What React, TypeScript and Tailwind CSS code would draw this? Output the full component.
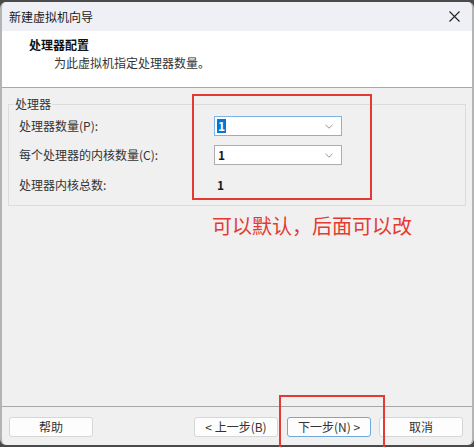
const cjk = "font-['Noto_Sans_CJK_SC','Noto_Sans',sans-serif]";

function Chevron() {
  return (
    <svg width="8" height="5" viewBox="0 0 8 5" className="text-[#8a8a8a]" aria-hidden="true">
      <path d="M0.5 0.8 L4 4.2 L7.5 0.8" fill="none" stroke="currentColor" strokeWidth="0.9" />
    </svg>
  );
}

function Combo({ focused }: { focused?: boolean }) {
  return (
    <div
      className={`flex h-[20px] w-[128px] items-center justify-between border bg-white pl-[2px] pr-[8px] ${
        focused ? 'border-[#7eb4ea]' : 'border-[#adadad]'
      }`}
    >
      {focused ? (
        <span className="flex h-[14px] items-center bg-[#0078d7] px-[1px] text-[12px] font-semibold leading-none text-white">1</span>
      ) : (
        <span className="px-[1px] text-[12px] font-semibold leading-none text-[#1a1a1a]">1</span>
      )}
      <Chevron />
    </div>
  );
}

function Btn({ children, focused }: { children: React.ReactNode; focused?: boolean }) {
  return (
    <button
      className={`flex h-[20px] w-[84px] items-center justify-center rounded-[3px] border bg-[#fdfdfd] text-[12px] leading-none text-[#333] ${
        focused ? 'border-[#6fa8dc]' : 'border-[#d6d6d6]'
      }`}
    >
      {children}
    </button>
  );
}

export default function App() {
  return (
    <div className={`relative h-[447px] w-[474px] overflow-hidden bg-[#4a4a4a] pt-[2px] ${cjk}`}>
      <div className="flex h-[443px] flex-col overflow-hidden rounded-[6px] border-x-2 border-[#b4b4b4] bg-[#f0f0f0]">
        {/* title bar */}
        <div className="flex h-[29px] shrink-0 items-center justify-between bg-[#eff0f5] pl-[7px] pr-[12px]">
          <span className="text-[12px] text-[#1a1a1a]">新建虚拟机向导</span>
          <svg width="11" height="11" viewBox="0 0 11 11" aria-hidden="true">
            <path d="M0.5 0.5 L10.5 10.5 M10.5 0.5 L0.5 10.5" stroke="#222" strokeWidth="1.1" />
          </svg>
        </div>

        {/* header */}
        <div className="flex h-[57px] shrink-0 flex-col border-b border-[#a8a8a8] bg-white pl-[27px] pt-[6px]">
          <span className="text-[12px] font-bold leading-[16px] text-[#111]">处理器配置</span>
          <span className="mt-[2px] pl-[25px] text-[12px] leading-[16px] text-[#333]">为此虚拟机指定处理器数量。</span>
        </div>

        {/* body */}
        <div className="flex-1 px-[6px] pt-[16px]">
          <div className="relative border border-[#dcdcdc] pb-[10px] pl-[10px] pt-[11px]">
            <span className="absolute left-[5px] top-[-9px] bg-[#f0f0f0] px-[1px] text-[12px] leading-[16px] text-[#333]">
              处理器
            </span>
            <div className="flex flex-col gap-[9px]">
              <div className="flex h-[20px] items-center">
                <span className="w-[195px] text-[12px] text-[#333]">处理器数量(P):</span>
                <Combo focused />
              </div>
              <div className="flex h-[20px] items-center">
                <span className="w-[195px] text-[12px] text-[#333]">每个处理器的内核数量(C):</span>
                <Combo />
              </div>
              <div className="mt-[1px] flex h-[20px] items-center">
                <span className="w-[198px] text-[12px] text-[#333]">处理器内核总数:</span>
                <span className="text-[12px] font-semibold text-[#1a1a1a]">1</span>
              </div>
            </div>
          </div>
        </div>

        {/* footer */}
        <div className="flex h-[39px] shrink-0 items-start border-t border-[#a8a8a8] pl-[7px] pr-[9px] pt-[10px]">
          <Btn>帮助</Btn>
          <div className="flex-1" />
          <div className="flex gap-[9px]">
            <Btn>&lt; 上一步(B)</Btn>
            <Btn focused>下一步(N) &gt;</Btn>
          </div>
          <div className="ml-[8px]">
            <Btn>取消</Btn>
          </div>
        </div>
      </div>

      {/* annotations */}
      <div className="absolute left-[192px] top-[94px] h-[106px] w-[180px] border-2 border-[#e53a30]" />
      <span className="absolute left-[212px] top-[213px] text-[20px] leading-[26px] text-[#e53a30]">
        可以默认，后面可以改
      </span>
      <div className="absolute left-[279px] top-[395px] h-[60px] w-[106px] border-2 border-[#e53a30]" />
    </div>
  );
}
